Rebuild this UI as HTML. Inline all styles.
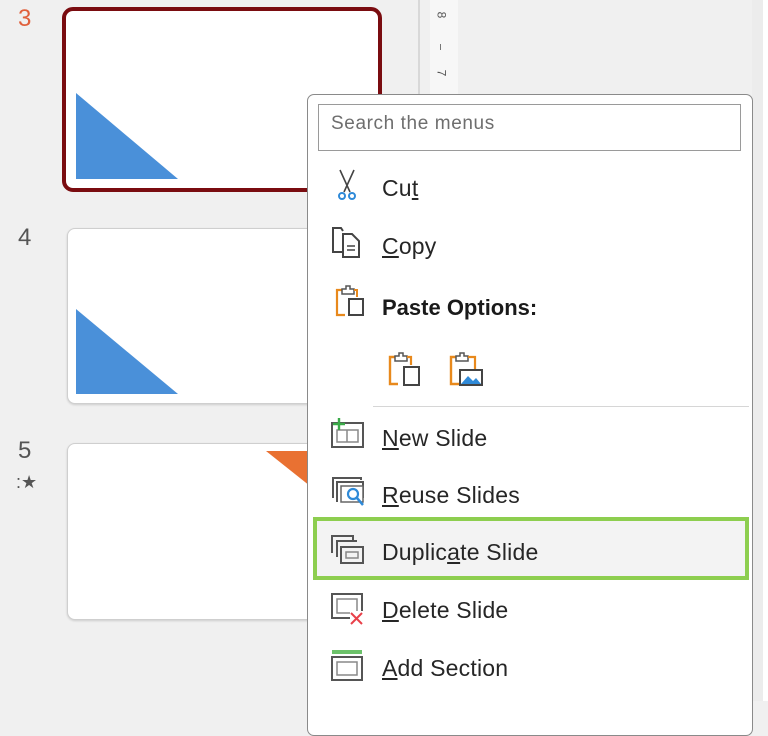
<!DOCTYPE html>
<html><head><meta charset="utf-8"><style>
body{margin:0;width:768px;height:701px;overflow:hidden;background:#f0f0f0;position:relative;font-family:"Liberation Sans",sans-serif}
.a{position:absolute}
.num{position:absolute;font-size:24px;color:#555}
.slide{position:absolute;background:#fff;border:1px solid #cfcfcf;border-radius:8px;box-shadow:0 1px 2px rgba(0,0,0,.15)}
.menu{position:absolute;left:307px;top:94px;width:444px;height:640px;background:#fff;border:1.5px solid #8a8a8a;border-radius:7px}
.t{position:absolute;left:382px;font-size:23px;color:#262626;line-height:26px;letter-spacing:0.2px}
.t u{text-decoration:underline;text-underline-offset:2px}
svg{position:absolute;overflow:visible}
</style></head><body>
<div class="num" style="left:18px;top:5px;color:#e0603c">3</div>
<div class="num" style="left:18px;top:224px">4</div>
<div class="num" style="left:18px;top:437px">5</div>
<div class="a" style="left:16px;top:472px;font-size:18px;color:#555">:★</div>

<div class="a" style="left:62px;top:7px;width:312px;height:177px;border:4px solid #7a0c10;border-radius:11px;background:#fff"></div>
<svg style="left:0;top:0" width="400" height="701"><polygon points="76,93 76,179 178,179" fill="#4a90d9"/></svg>
<div class="slide" style="left:67px;top:228px;width:300px;height:174px"></div>
<svg style="left:0;top:0" width="400" height="701"><polygon points="76,309 76,394 178,394" fill="#4a90d9"/></svg>
<div class="slide" style="left:67px;top:443px;width:300px;height:175px"></div>
<svg style="left:0;top:0" width="400" height="701"><polygon points="266,451 310,451 310,486" fill="#e97132"/></svg>

<div class="a" style="left:418px;top:0;width:2px;height:95px;background:#d8d8d8"></div>
<div class="a" style="left:430px;top:0;width:28px;height:95px;background:#f7f7f7"></div>
<div class="a" style="left:438px;top:8px;font-size:12px;color:#555;transform:rotate(90deg)">8</div>
<div class="a" style="left:438px;top:66px;font-size:12px;color:#555;transform:rotate(90deg)">7</div>
<div class="a" style="left:440px;top:44px;width:1px;height:6px;background:#777"></div>
<div class="a" style="left:752px;top:0;width:11px;height:701px;background:#ececec"></div>
<div class="a" style="left:763px;top:0;width:5px;height:701px;background:#fff"></div>

<div class="menu"></div>
<div class="a" style="left:318px;top:104px;width:421px;height:45px;border:1.5px solid #9a9a9a;background:#fff"></div>
<div class="a" style="left:331px;top:113px;font-size:19px;color:#6e6e6e;letter-spacing:0.6px">Search the menus</div>

<div class="t" style="top:175px">Cu<u>t</u></div>
<div class="t" style="top:233px"><u>C</u>opy</div>
<div class="t" style="top:295px;font-weight:bold;font-size:22px;color:#1a1a1a;letter-spacing:0">Paste Options:</div>
<div class="a" style="left:373px;top:406px;width:376px;height:1px;background:#d6d6d6"></div>
<div class="t" style="top:425px"><u>N</u>ew Slide</div>
<div class="t" style="top:482px"><u>R</u>euse Slides</div>
<div class="a" style="left:313px;top:517px;width:428px;height:55px;border:4px solid #8dce4f;background:#f3f3f3"></div>
<div class="t" style="top:539px">Duplic<u>a</u>te Slide</div>
<div class="t" style="top:597px"><u>D</u>elete Slide</div>
<div class="t" style="top:655px"><u>A</u>dd Section</div>

<!-- Cut -->
<svg style="left:336px;top:170px" width="24" height="32"><path d="M4 0 L14 22 M18 0 L8 22" stroke="#444" stroke-width="1.6" fill="none"/><circle cx="6" cy="26" r="3" stroke="#2f8ad8" stroke-width="2" fill="none"/><circle cx="16" cy="26" r="3" stroke="#2f8ad8" stroke-width="2" fill="none"/></svg>
<!-- Copy -->
<svg style="left:331px;top:226px" width="34" height="34"><path d="M12 26 H2 V2 H10 L12 5" stroke="#444" stroke-width="2" fill="none"/><path d="M12 8 H21 L28 15 V31 H12 Z" stroke="#444" stroke-width="2" fill="#fff"/><path d="M16 20 H24 M16 24 H24" stroke="#444" stroke-width="1.5"/></svg>
<!-- Paste header -->
<svg style="left:335px;top:285px" width="32" height="34"><path d="M8 5 H2 V30 H10" stroke="#e8891c" stroke-width="2.2" fill="none"/><path d="M7 4 H11 V1 H15 V4 H19 V9 H7 Z" stroke="#555" stroke-width="1.5" fill="#fff"/><path d="M19 5 H22 V12" stroke="#e8891c" stroke-width="2" fill="none"/><rect x="14" y="14" width="14" height="16" stroke="#444" stroke-width="2" fill="#fff"/></svg>
<!-- Paste opts -->
<svg style="left:388px;top:352px" width="34" height="36"><path d="M8 5 H2 V32 H10" stroke="#e8891c" stroke-width="2.4" fill="none"/><path d="M7 4 H11 V1 H15 V4 H19 V9 H7 Z" stroke="#555" stroke-width="1.5" fill="#fff"/><path d="M19 5 H23 V13" stroke="#e8891c" stroke-width="2.2" fill="none"/><rect x="16" y="15" width="15" height="18" stroke="#444" stroke-width="2" fill="#fff"/></svg>
<svg style="left:449px;top:352px" width="36" height="36"><path d="M8 5 H2 V32 H10" stroke="#e8891c" stroke-width="2.4" fill="none"/><path d="M7 4 H11 V1 H15 V4 H19 V9 H7 Z" stroke="#555" stroke-width="1.5" fill="#fff"/><path d="M19 5 H26 V17" stroke="#e8891c" stroke-width="2.2" fill="none"/><rect x="11" y="18" width="22" height="15" stroke="#444" stroke-width="2" fill="#fff"/><path d="M12 32 L19 24 L24 29 L27 26 L32 32 Z" fill="#2f8ad8"/></svg>
<!-- New slide -->
<svg style="left:331px;top:418px" width="34" height="32"><rect x="1" y="5" width="31" height="24" stroke="#555" stroke-width="2" fill="#fff"/><rect x="6" y="12" width="21" height="12" stroke="#888" stroke-width="1.5" fill="none"/><path d="M16 12 V24" stroke="#888" stroke-width="1.5"/><path d="M8 0 V12 M2 6 H14" stroke="#3aaa48" stroke-width="2.4"/></svg>
<!-- Reuse -->
<svg style="left:331px;top:476px" width="36" height="34"><path d="M2 22 V2 H30 V4" stroke="#555" stroke-width="2" fill="none"/><path d="M6 26 V6 H32 V22" stroke="#555" stroke-width="2" fill="none"/><rect x="10" y="10" width="22" height="16" stroke="#666" stroke-width="1.5" fill="#fff"/><circle cx="22" cy="18" r="5" stroke="#2f8ad8" stroke-width="2.2" fill="#fff"/><path d="M26 22 L32 29" stroke="#2f8ad8" stroke-width="2.5"/></svg>
<!-- Duplicate -->
<svg style="left:331px;top:535px" width="34" height="30"><path d="M1 18 V1 H22 V6" stroke="#555" stroke-width="2" fill="none"/><path d="M6 22 V6 H26" stroke="#555" stroke-width="2" fill="none"/><rect x="10" y="12" width="22" height="16" stroke="#555" stroke-width="2" fill="#f3f3f3"/><rect x="15" y="17" width="12" height="6" stroke="#888" stroke-width="1.5" fill="none"/></svg>
<!-- Delete -->
<svg style="left:331px;top:593px" width="36" height="34"><rect x="1" y="1" width="30" height="24" stroke="#555" stroke-width="2" fill="#fff"/><rect x="6" y="6" width="20" height="14" stroke="#888" stroke-width="1.5" fill="none"/><rect x="19" y="18" width="14" height="14" fill="#fff"/><path d="M20 20 L31 31 M31 20 L20 31" stroke="#e8404a" stroke-width="2"/></svg>
<!-- Add Section -->
<svg style="left:331px;top:649px" width="34" height="34"><rect x="1" y="1" width="30" height="4" fill="#6cc26a"/><rect x="1" y="8" width="30" height="23" stroke="#555" stroke-width="2" fill="#fff"/><rect x="6" y="13" width="20" height="13" stroke="#888" stroke-width="1.5" fill="none"/></svg>
</body></html>
